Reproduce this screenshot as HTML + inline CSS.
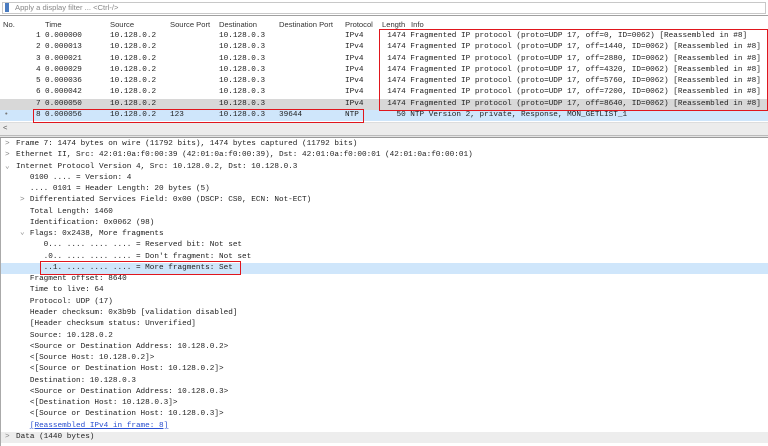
<!DOCTYPE html>
<html><head><style>
*{margin:0;padding:0;box-sizing:border-box}
body{width:768px;height:446px;background:#fff;position:relative;overflow:hidden;font-family:"Liberation Mono",monospace;font-size:7.7px;color:#222}
.a{position:absolute;white-space:pre;line-height:11px}
.s{font-family:"Liberation Sans",sans-serif;font-size:7.6px;color:#333}
.r{position:absolute;left:0;width:768px;height:11.3px}
.box{position:absolute;border:1.5px solid #e0161d}
</style></head><body>
<div style="position:absolute;left:0;top:0;width:768px;height:16px;background:#fff;border-bottom:1px solid #a0a0a0"></div>
<div style="position:absolute;left:2px;top:2px;width:764px;height:12px;border:1px solid #c8c8c8"></div>
<div style="position:absolute;left:5px;top:3px;width:4px;height:9px;background:#4a7bc0"></div>
<div class="a s" style="left:15px;top:2px;color:#888">Apply a display filter ... &lt;Ctrl-/&gt;</div>
<div class="a s" style="left:3px;top:19px">No.</div>
<div class="a s" style="left:45px;top:19px">Time</div>
<div class="a s" style="left:110px;top:19px">Source</div>
<div class="a s" style="left:170px;top:19px">Source Port</div>
<div class="a s" style="left:219px;top:19px">Destination</div>
<div class="a s" style="left:279px;top:19px">Destination Port</div>
<div class="a s" style="left:345px;top:19px">Protocol</div>
<div class="a s" style="left:382px;top:19px">Length</div>
<div class="a s" style="left:411px;top:19px">Info</div>
<div class="r" style="top:99px;background:#d8d8d8"></div>
<div class="r" style="top:110px;background:#cfe6fb"></div>
<div style="position:absolute;left:0;top:122px;width:768px;height:13px;background:#ececec;border-top:1px solid #ddd"></div>
<div class="a s" style="left:3px;top:122px;color:#555">&lt;</div>
<div class="a" style="left:4px;top:110px;color:#777">•</div>
<div class="a" style="left:378px;top:31px;line-height:11.3px">  1474 Fragmented IP protocol (proto=UDP 17, off=0, ID=0062) [Reassembled in #8]
  1474 Fragmented IP protocol (proto=UDP 17, off=1440, ID=0062) [Reassembled in #8]
  1474 Fragmented IP protocol (proto=UDP 17, off=2880, ID=0062) [Reassembled in #8]
  1474 Fragmented IP protocol (proto=UDP 17, off=4320, ID=0062) [Reassembled in #8]
  1474 Fragmented IP protocol (proto=UDP 17, off=5760, ID=0062) [Reassembled in #8]
  1474 Fragmented IP protocol (proto=UDP 17, off=7200, ID=0062) [Reassembled in #8]
  1474 Fragmented IP protocol (proto=UDP 17, off=8640, ID=0062) [Reassembled in #8]
    50 NTP Version 2, private, Response, MON_GETLIST_1</div>
<div class="a" style="left:36px;top:31px;line-height:11.3px">1
2
3
4
5
6
7
8</div>
<div class="a" style="left:45px;top:31px;line-height:11.3px">0.000000
0.000013
0.000021
0.000029
0.000036
0.000042
0.000050
0.000056</div>
<div class="a" style="left:110px;top:31px;line-height:11.3px">10.128.0.2
10.128.0.2
10.128.0.2
10.128.0.2
10.128.0.2
10.128.0.2
10.128.0.2
10.128.0.2</div>
<div class="a" style="left:170px;top:110px">123</div>
<div class="a" style="left:219px;top:31px;line-height:11.3px">10.128.0.3
10.128.0.3
10.128.0.3
10.128.0.3
10.128.0.3
10.128.0.3
10.128.0.3
10.128.0.3</div>
<div class="a" style="left:279px;top:110px">39644</div>
<div class="a" style="left:345px;top:31px;line-height:11.3px">IPv4
IPv4
IPv4
IPv4
IPv4
IPv4
IPv4
NTP</div>
<div class="box" style="left:379px;top:29px;width:389px;height:82px"></div>
<div class="box" style="left:33px;top:109px;width:331px;height:14px"></div>
<div style="position:absolute;left:0;top:135px;width:768px;height:3px;border-top:1px solid #bbb;border-bottom:1px solid #999;background:#e4e4e4"></div>
<div class="r" style="top:263px;background:#cfe6fb"></div>
<div class="r" style="top:432px;background:#ededed"></div>
<div style="position:absolute;left:0;top:138px;width:1px;height:308px;background:#aaa"></div>
<div class="a" style="left:5px;top:139px;line-height:11.27px;color:#888">&gt;
&gt;
⌄</div>
<div class="a" style="left:20px;top:195px;color:#888">&gt;</div>
<div class="a" style="left:20px;top:228px;color:#888">⌄</div>
<div class="a" style="left:5px;top:432px;color:#888">&gt;</div>
<div class="a" style="left:16px;top:139px;line-height:11.27px">Frame 7: 1474 bytes on wire (11792 bits), 1474 bytes captured (11792 bits)
Ethernet II, Src: 42:01:0a:f0:00:39 (42:01:0a:f0:00:39), Dst: 42:01:0a:f0:00:01 (42:01:0a:f0:00:01)
Internet Protocol Version 4, Src: 10.128.0.2, Dst: 10.128.0.3
   0100 .... = Version: 4
   .... 0101 = Header Length: 20 bytes (5)
   Differentiated Services Field: 0x00 (DSCP: CS0, ECN: Not-ECT)
   Total Length: 1460
   Identification: 0x0062 (98)
   Flags: 0x2438, More fragments
      0... .... .... .... = Reserved bit: Not set
      .0.. .... .... .... = Don't fragment: Not set
      ..1. .... .... .... = More fragments: Set
   Fragment offset: 8640
   Time to live: 64
   Protocol: UDP (17)
   Header checksum: 0x3b9b [validation disabled]
   [Header checksum status: Unverified]
   Source: 10.128.0.2
   &lt;Source or Destination Address: 10.128.0.2&gt;
   &lt;[Source Host: 10.128.0.2]&gt;
   &lt;[Source or Destination Host: 10.128.0.2]&gt;
   Destination: 10.128.0.3
   &lt;Source or Destination Address: 10.128.0.3&gt;
   &lt;[Destination Host: 10.128.0.3]&gt;
   &lt;[Source or Destination Host: 10.128.0.3]&gt;
   <span style="color:#2a4fd0;text-decoration:underline">[Reassembled IPv4 in frame: 8]</span>
Data (1440 bytes)</div>
<div class="box" style="left:40px;top:261px;width:201px;height:14px"></div>
</body></html>
